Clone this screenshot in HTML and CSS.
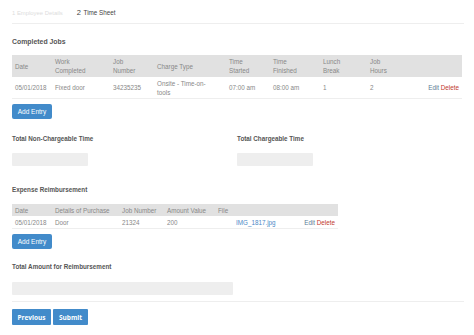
FILE: index.html
```html
<!DOCTYPE html>
<html>
<head>
<meta charset="utf-8">
<link rel="stylesheet" href="styles.css">
</head>
<body>
<div class="page">
  <div class="steps">
    <span class="step done"><span class="num">1</span> Employee Details</span>
    <span class="step active"><span class="num">2</span> Time Sheet</span>
  </div>

  <div class="title t-jobs">Completed Jobs</div>
  <table class="grid jobs">
    <colgroup>
      <col style="width:40px"><col style="width:58px"><col style="width:44px"><col style="width:72px"><col style="width:44px"><col style="width:50px"><col style="width:47px"><col style="width:47px"><col style="width:48px">
    </colgroup>
    <thead>
      <tr><th>Date</th><th>Work<br>Completed</th><th>Job<br>Number</th><th>Charge Type</th><th>Time<br>Started</th><th>Time<br>Finished</th><th>Lunch<br>Break</th><th>Job<br>Hours</th><th></th></tr>
    </thead>
    <tbody>
      <tr><td>05/01/2018</td><td>Fixed door</td><td>34235235</td><td>Onsite - Time-on-<br>tools</td><td>07:00 am</td><td>08:00 am</td><td>1</td><td>2</td><td class="actions"><a class="edit">Edit</a> <a class="del">Delete</a></td></tr>
    </tbody>
  </table>
  <button class="btn add">Add Entry</button>

  <div class="totals">
    <div class="field">
      <div class="title">Total Non-Chargeable Time</div>
      <div class="box short"></div>
    </div>
    <div class="field">
      <div class="title">Total Chargeable Time</div>
      <div class="box short"></div>
    </div>
  </div>

  <div class="title t-exp">Expense Reimbursement</div>
  <table class="grid exp">
    <colgroup>
      <col style="width:40px"><col style="width:67px"><col style="width:45px"><col style="width:51px"><col style="width:75px"><col style="width:48px">
    </colgroup>
    <thead>
      <tr><th>Date</th><th>Details of Purchase</th><th>Job Number</th><th>Amount Value</th><th>File</th><th></th></tr>
    </thead>
    <tbody>
      <tr><td>05/01/2018</td><td>Door</td><td>21324</td><td>200</td><td class="file"><a>IMG_1817.jpg</a></td><td class="actions"><a class="edit">Edit</a> <a class="del">Delete</a></td></tr>
    </tbody>
  </table>
  <button class="btn add">Add Entry</button>

  <div class="title t-amt">Total Amount for Reimbursement</div>
  <div class="box wide"></div>

  <div class="footer">
    <button class="btn nav">Previous</button>
    <button class="btn nav">Submit</button>
  </div>
</div>
</body>
</html>
```

FILE: styles.css
```css
html, body {
  margin: 0;
  padding: 0;
  background: #fff;
}
body {
  font-family: "Liberation Sans", Arial, sans-serif;
  font-size: 6.3px;
  color: #777;
}
.page {
  width: 452px;
  padding: 0 10px 0 12px;
}
.steps {
  display: flex;
  align-items: center;
  gap: 14px;
  height: 24px;
  padding-top: 2px;
  box-sizing: border-box;
  border-bottom: 1px solid #eee;
}
.step.done {
  color: #ddd;
  font-size: 5.9px;
}
.step.active {
  color: #444;
}
.step.active .num {
  font-size: 7.5px;
  margin-right: 1px;
}
.title {
  font-weight: bold;
  color: #555;
  line-height: 10px;
}
.t-jobs {
  font-size: 6.9px;
  margin-top: 13px;
  margin-bottom: 8px;
}
.grid {
  border-collapse: collapse;
  table-layout: fixed;
}
.jobs {
  width: 450px;
}
.exp {
  width: 326px;
}
.grid th {
  background: #e1e1e1;
  color: #888;
  font-weight: normal;
  text-align: left;
  padding: 0 3px;
  line-height: 9px;
}
.grid td {
  padding: 0 3px;
  line-height: 9px;
  color: #888;
  border-bottom: 1px solid #eee;
}
.jobs th { height: 22px; }
.jobs td { height: 21px; }
.exp th { height: 12px; }
.exp td { height: 12px; }
.grid td.actions {
  text-align: right;
}
.edit { color: #607d95; }
.del { color: #c0392b; }
.file a {
  color: #4a88c6;
  padding-left: 18px;
}
.btn {
  display: block;
  border: none;
  border-radius: 2px;
  background: #428bca;
  color: #fff;
  font-family: "Liberation Sans", Arial, sans-serif;
  font-size: 6.5px;
  padding: 0;
  cursor: pointer;
}
.add {
  width: 40px;
  height: 15px;
  margin-top: 5px;
}
.totals {
  display: grid;
  grid-template-columns: 225px 225px;
  margin-top: 15px;
}
.field .title {
  margin-bottom: 9px;
}
.box {
  background: #eee;
  border-radius: 1px;
  height: 13px;
}
.short { width: 76px; }
.wide { width: 221px; }
.t-exp {
  margin-top: 19px;
  margin-bottom: 9px;
}
.t-amt {
  margin-top: 13px;
  margin-bottom: 10px;
}
.footer {
  display: flex;
  gap: 2px;
  margin-top: 6px;
  padding-top: 7px;
  border-top: 1px solid #eee;
}
.nav {
  font-family: "Open Sans", sans-serif;
  font-weight: bold;
  height: 16px;
  border-radius: 1px;
}
.nav:first-child { width: 39px; }
.nav:last-child { width: 35px; }
```
